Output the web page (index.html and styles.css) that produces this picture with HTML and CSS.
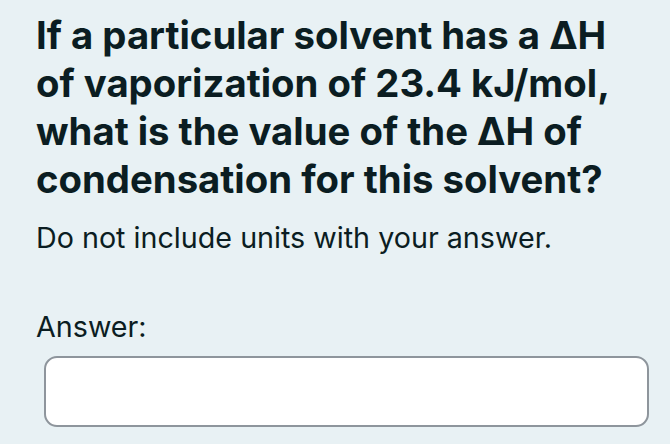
FILE: index.html
```html
<!DOCTYPE html>
<html>
<head>
<meta charset="utf-8">
<link rel="stylesheet" href="styles.css">
</head>
<body>
<main class="question">
  <h1 class="prompt">If a particular solvent has a ΔH of vaporization of 23.4 kJ/mol, what is the value of the ΔH of condensation for this solvent?</h1>
  <p class="hint">Do not include units with your answer.</p>
  <label class="answer-label" for="answer">Answer:</label>
  <div class="answer-wrap"><input id="answer" class="answer-input" type="text"></div>
</main>
</body>
</html>
```
FILE: styles.css
```css
html, body {
  margin: 0;
  padding: 0;
  background: #e8f1f4;
}
body {
  font-family: Inter, "Noto Sans", sans-serif;
  color: #0b1d22;
}
.question {
  padding: 11px 21px 0 36px;
  display: flex;
  flex-direction: column;
}
.prompt {
  margin: 0;
  font-size: 38.3px;
  font-weight: 700;
  line-height: 48px;
}
.hint {
  margin: 17px 0 0 0;
  font-size: 28.7px;
  line-height: 36px;
}
.answer-label {
  margin-top: 53px;
  font-size: 28.7px;
  line-height: 36px;
}
.answer-wrap {
  margin-top: 11px;
  padding-left: 8px;
}
.answer-input {
  box-sizing: border-box;
  width: 100%;
  height: 71px;
  border: 2px solid #8e959c;
  border-radius: 13px;
  background: #fff;
  outline: none;
}
```
